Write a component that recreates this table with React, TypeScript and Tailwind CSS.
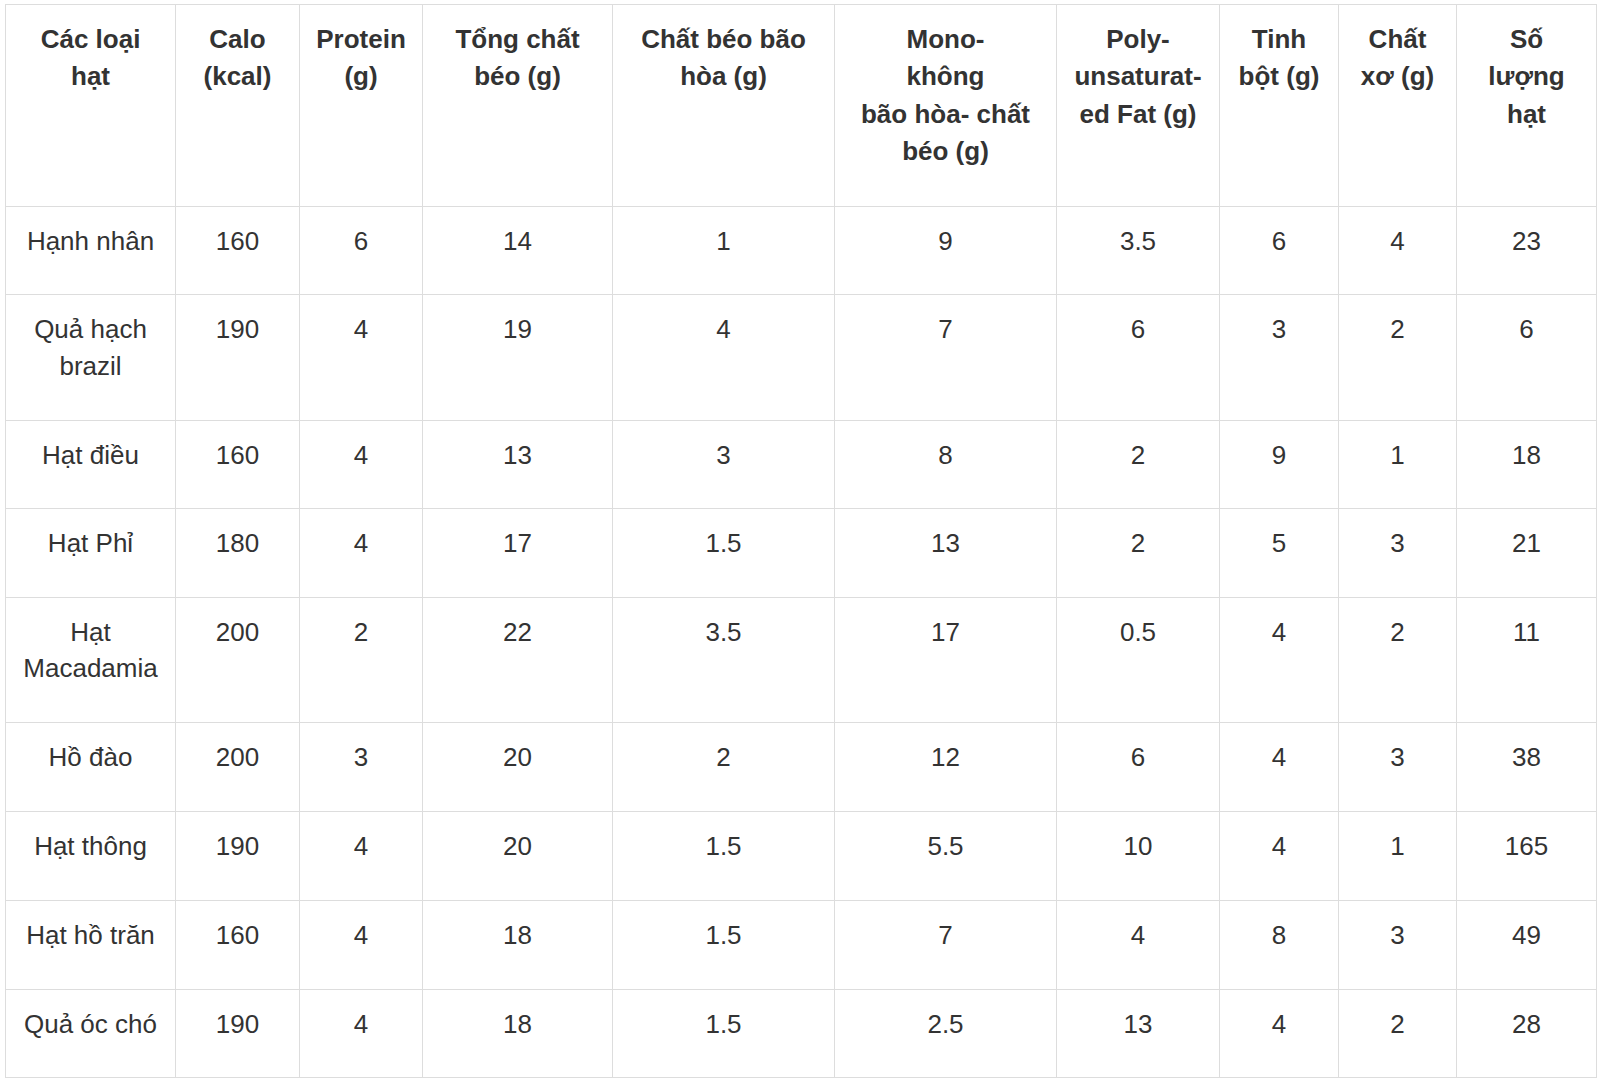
import React from "react";

const headers: string[][] = [
  ["Các loại", "hạt"],
  ["Calo", "(kcal)"],
  ["Protein", "(g)"],
  ["Tổng chất", "béo (g)"],
  ["Chất béo bão", "hòa (g)"],
  ["Mono-", "không", "bão hòa- chất", "béo (g)"],
  ["Poly-", "unsaturat-", "ed Fat (g)"],
  ["Tinh", "bột (g)"],
  ["Chất", "xơ (g)"],
  ["Số", "lượng", "hạt"],
];

const widths = [170, 124, 123, 190, 222, 222, 163, 119, 118, 140];

const rows: string[][][] = [
  [["Hạnh nhân"], ["160"], ["6"], ["14"], ["1"], ["9"], ["3.5"], ["6"], ["4"], ["23"]],
  [["Quả hạch", "brazil"], ["190"], ["4"], ["19"], ["4"], ["7"], ["6"], ["3"], ["2"], ["6"]],
  [["Hạt điều"], ["160"], ["4"], ["13"], ["3"], ["8"], ["2"], ["9"], ["1"], ["18"]],
  [["Hạt Phỉ"], ["180"], ["4"], ["17"], ["1.5"], ["13"], ["2"], ["5"], ["3"], ["21"]],
  [["Hạt", "Macadamia"], ["200"], ["2"], ["22"], ["3.5"], ["17"], ["0.5"], ["4"], ["2"], ["11"]],
  [["Hồ đào"], ["200"], ["3"], ["20"], ["2"], ["12"], ["6"], ["4"], ["3"], ["38"]],
  [["Hạt thông"], ["190"], ["4"], ["20"], ["1.5"], ["5.5"], ["10"], ["4"], ["1"], ["165"]],
  [["Hạt hồ trăn"], ["160"], ["4"], ["18"], ["1.5"], ["7"], ["4"], ["8"], ["3"], ["49"]],
  [["Quả óc chó"], ["190"], ["4"], ["18"], ["1.5"], ["2.5"], ["13"], ["4"], ["2"], ["28"]],
];

function Lines({ lines }: { lines: string[] }) {
  return (
    <>
      {lines.map((l, i) => (
        <React.Fragment key={i}>
          {i > 0 && <br />}
          <span className="whitespace-nowrap">{l}</span>
        </React.Fragment>
      ))}
    </>
  );
}

export default function App() {
  return (
    <div
      className="min-h-[1083px] w-[1600px] bg-white pt-[4px] pl-[5px]"
      style={{ fontFamily: '"Liberation Sans", Arial, "Noto Sans", sans-serif' }}
    >
      <table className="table-fixed border-collapse text-[26px] text-[#333333] w-[1591px]">
        <colgroup>
          {widths.map((w, i) => (
            <col key={i} style={{ width: w }} />
          ))}
        </colgroup>
        <thead>
          <tr>
            {headers.map((h, i) => (
              <th
                key={i}
                className="border border-[#dddddd] px-1 pt-[16px] pb-[35.5px] align-top text-center font-bold leading-[37.3px]"
              >
                <Lines lines={h} />
              </th>
            ))}
          </tr>
        </thead>
        <tbody>
          {rows.map((r, ri) => (
            <tr key={ri}>
              {r.map((c, ci) => (
                <td
                  key={ci}
                  className="border border-[#dddddd] px-1 pt-[16px] pb-[35.5px] align-top text-center font-normal leading-[36.3px]"
                >
                  <Lines lines={c} />
                </td>
              ))}
            </tr>
          ))}
        </tbody>
      </table>
    </div>
  );
}
